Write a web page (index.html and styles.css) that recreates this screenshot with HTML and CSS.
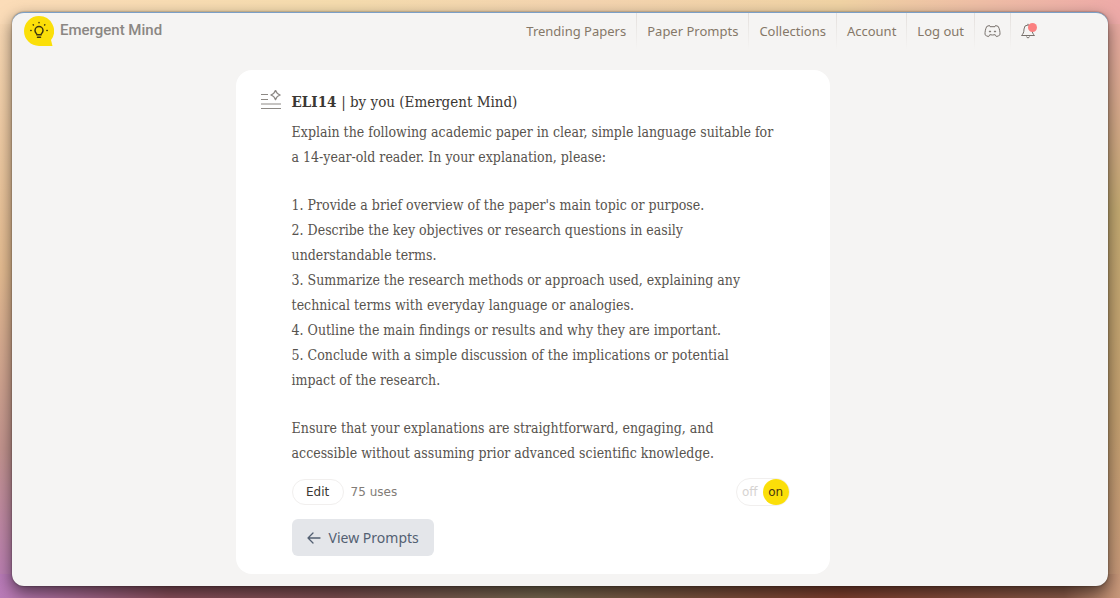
FILE: index.html
```html
<!DOCTYPE html>
<html lang="en">
<head>
    <meta charset="UTF-8">
    <title>Emergent Mind</title>
    <link rel="stylesheet" href="styles.css">
</head>
<body>

<div class="window">

    <header>
        <a class="logo" href="#">
            <svg width="30" height="30" viewBox="0 0 30 30" fill="none">
                <path fill="#fbdf09" d="M15 0a15 15 0 1 0 0 30h13.500l-1.500-6A15 15 0 0 0 15 0z"/>
                <g stroke="#3d3510" stroke-width="1.500" stroke-linecap="round">
                    <path d="M13 18.800c0-1.200-2-2-2-4.300a4 4 0 0 1 8 0c0 2.300-2 3.100-2 4.300zM13.500 21.300h3"/>
                    <path d="M15 6.500v.3M9.200 8.800l.2.200M20.800 8.800l-.2.200M6.800 14.500h.3M23.200 14.500h-.3"/>
                </g>
            </svg>
            <span>Emergent Mind</span>
        </a>
        <nav>
            <a href="#">Trending Papers</a>
            <a href="#">Paper Prompts</a>
            <a href="#">Collections</a>
            <a href="#">Account</a>
            <a href="#">Log out</a>
            <a class="icon" href="#" aria-label="Discord">
                <svg width="17" height="16" viewBox="0 0 17 16" fill="none" stroke="#78716c">
                    <path d="M5.500 2.500 6 3.700h5l.5-1.200 2.700.9c1.300 2.400 1.900 5 1.800 8.300-1 1-2.200 1.600-3.600 1.900l-1.200-1.900c-1.700.4-3.700.4-5.400 0l-1.200 1.900C3.200 13.300 2 12.700 1 11.700.9 8.400 1.500 5.800 2.800 3.400z" stroke-linejoin="round"/>
                    <circle cx="6" cy="8.500" r=".6" fill="#78716c"/>
                    <circle cx="11" cy="8.500" r=".6" fill="#78716c"/>
                </svg>
            </a>
            <a class="icon bell" href="#" aria-label="Notifications">
                <svg width="16" height="16" viewBox="0 0 16 16" fill="none" stroke="#78716c">
                    <path d="M8 2a4 4 0 0 0-4 4c0 3.500-1 5-2.500 6.500h13C13 11 12 9.500 12 6a4 4 0 0 0-4-4zM8 .8V2" stroke-linejoin="round"/>
                    <path d="M6.500 13.500c.3 1.800 2.700 1.800 3 0"/>
                </svg>
                <span class="dot"></span>
            </a>
        </nav>
    </header>

    <main>
        <svg class="prompt-icon" width="20" height="20" viewBox="0 0 20 20" fill="none" stroke="#8d8985" stroke-width="1.200">
            <path d="M0 4.500h7M0 9.500h7M0 14h20M0 18.500h20"/>
            <path d="M14.500.3c.9 2.900 1.900 3.900 4.700 4.700-2.800.8-3.800 1.800-4.700 4.700-.9-2.900-1.900-3.900-4.700-4.700 2.800-.8 3.800-1.800 4.700-4.700z" stroke-linejoin="round"/>
        </svg>
        <div class="prompt">
            <h1>ELI14 <span>| by you (Emergent Mind)</span></h1>
            <p>Explain the following academic paper in clear, simple language suitable for<br>
                a 14-year-old reader. In your explanation, please:</p>
            <p>1. Provide a brief overview of the paper's main topic or purpose.<br>
                2. Describe the key objectives or research questions in easily<br>
                understandable terms.<br>
                3. Summarize the research methods or approach used, explaining any<br>
                technical terms with everyday language or analogies.<br>
                4. Outline the main findings or results and why they are important.<br>
                5. Conclude with a simple discussion of the implications or potential<br>
                impact of the research.</p>
            <p>Ensure that your explanations are straightforward, engaging, and<br>
                accessible without assuming prior advanced scientific knowledge.</p>

            <div class="actions">
                <button class="edit">Edit</button>
                <span class="uses">75 uses</span>
                <button class="toggle" role="switch" aria-checked="true">
                    <span>off</span><span class="on">on</span>
                </button>
            </div>

            <a class="back" href="#">
                <svg width="14" height="14" viewBox="0 0 14 14" fill="none" stroke="#536072" stroke-width="1.300" stroke-linecap="round" stroke-linejoin="round">
                    <path d="M13 7H1M6 2 1 7l5 5"/>
                </svg>
                View Prompts
            </a>
        </div>
    </main>

</div>

</body>
</html>
```

FILE: styles.css
```css
* {
    box-sizing: border-box;
}

body {
    margin: 0;
    min-height: 100vh;
    display: flex;
    padding: 12px;
    font-family: "Noto Sans", sans-serif;
    font-size: 13px;
    background:
        linear-gradient(90deg, #b97bb8 0%, #8a505c 15%, #7c4f50 30%, #75664e 48%, #80402f 75%, #8a5a48 95%, #c8987a 100%) bottom / 100% 24px no-repeat,
        linear-gradient(90deg, #fbdcb8 0%, #f5dcae 30%, #f4d4b0 52%, #f0d3a4 75%, #eeaaa8 100%) top / 100% 24px no-repeat,
        linear-gradient(#fbdcb8 0%, #e6bd92 45%, #c4958f 75%, #b97bb8 100%) left / 50% 100% no-repeat,
        linear-gradient(#eeaaa8 0%, #c4aa72 35%, #c4a070 70%, #c8987a 100%) right / 50% 100% no-repeat;
}

a {
    color: inherit;
    text-decoration: none;
}

.window {
    flex: 1;
    background: #f5f4f3;
    border-top: 1px solid #7b9fc6;
    border-radius: 12px;
    box-shadow: 0 0 2px rgba(0, 0, 0, .5), 0 6px 16px rgba(0, 0, 0, .55);
}

header {
    display: flex;
    justify-content: space-between;
    padding: 0 63px 0 12px;
}

.logo {
    display: flex;
    gap: 6px;
    padding-top: 3px;
    font: 500 15px/28px Roboto, sans-serif;
    color: #8b8783;
}

nav {
    display: flex;
    color: #857868;
}

nav a {
    position: relative;
    display: flex;
    align-items: center;
    height: 36px;
    padding: 0 10px;
    border-right: 1px solid;
    border-image: linear-gradient(#e3dfdc, #f5f4f3) 1;
}

nav .icon {
    padding: 0 9px;
}

nav .bell {
    border: 0;
}

.dot {
    position: absolute;
    top: 10px;
    right: 8px;
    width: 9px;
    height: 9px;
    border-radius: 50%;
    background: #fb8080;
}

main {
    display: flex;
    gap: 11px;
    width: 54.2%;
    margin: 21px 0 12px 20.4%;
    padding: 20px 40px 18px 25px;
    background: #fff;
    border-radius: 16px;
}

.prompt-icon {
    flex: none;
}

.prompt {
    flex: 1;
    font-family: "DejaVu Serif Condensed", "Liberation Serif", serif;
    color: #57534e;
}

h1 {
    margin: 0 0 6px;
    font-size: 15px;
    line-height: 24px;
    color: #3b3733;
}

h1 span {
    font-weight: normal;
}

p {
    margin: 0 0 23px;
    font-size: 14px;
    line-height: 25px;
}

.actions {
    display: flex;
    align-items: center;
    margin-top: -11px;
    font: 12px "DejaVu Sans", sans-serif;
}

.edit,
.toggle {
    font: inherit;
    background: #fff;
    border: 1px solid #f1efee;
    border-radius: 14px;
}

.edit {
    width: 52px;
    height: 26px;
    color: #3b3733;
}

.uses {
    margin-left: 7px;
    color: #827c77;
}

.toggle {
    display: flex;
    align-items: center;
    gap: 5px;
    height: 28px;
    margin-left: auto;
    padding: 0 0 0 5px;
    color: #d6d3d1;
}

.on {
    width: 26px;
    border-radius: 50%;
    line-height: 26px;
    color: #4a3710;
    background: #fbdf09;
}

.back {
    display: inline-flex;
    align-items: center;
    gap: 8px;
    height: 37px;
    margin-top: 13px;
    padding: 0 15px;
    border-radius: 6px;
    font: 14px "Noto Sans", sans-serif;
    color: #536072;
    background: #e4e6ea;
}
```
